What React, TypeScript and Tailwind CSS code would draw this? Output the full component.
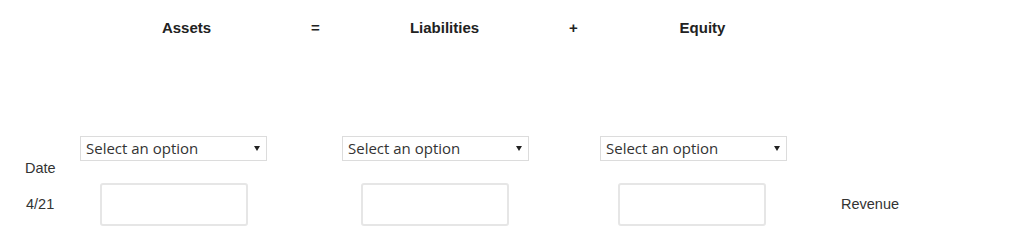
const headers = ['Assets', '=', 'Liabilities', '+', 'Equity'];

function OptionSelect({ className }: { className?: string }) {
  return (
    <div className={`flex h-[25px] w-[187px] items-center justify-between border border-[#dcdcdc] bg-white pl-[5px] pr-[6px] ${className ?? ''}`}>
      <span className="font-['Open_Sans',sans-serif] text-[15px] leading-none text-[#333]">Select an option</span>
      <span className="h-0 w-0 border-x-[3px] border-t-[5px] border-x-transparent border-t-[#222]" />
    </div>
  );
}

function AmountBox({ className }: { className?: string }) {
  return <div className={`h-[43px] w-[148px] rounded-[3px] border-2 border-[#e6e6e6] bg-white ${className ?? ''}`} />;
}

export default function App() {
  return (
    <div className="h-[241px] w-[1024px] bg-white font-['Liberation_Sans',Arial,sans-serif] text-[#222]">
      <div className="grid grid-cols-[repeat(5,129px)] pl-[122px] pt-[19px] text-[15px] font-bold leading-[18px]">
        {headers.map((h) => (
          <div key={h} className="text-center">{h}</div>
        ))}
      </div>

      <div className="mt-[99px] flex h-[40px]">
        <div className="flex w-[80px] items-end pl-[25px] text-[14.5px] leading-[16px] text-[#333]">Date</div>
        <OptionSelect />
        <OptionSelect className="ml-[75px]" />
        <OptionSelect className="ml-[71px]" />
      </div>

      <div className="mt-[7px] flex items-center">
        <div className="w-[100px] pl-[26px] text-[14.5px] text-[#333]">4/21</div>
        <AmountBox />
        <AmountBox className="ml-[113px]" />
        <AmountBox className="ml-[109px]" />
        <div className="ml-[75px] text-[14.5px] text-[#333]">Revenue</div>
      </div>
    </div>
  );
}
